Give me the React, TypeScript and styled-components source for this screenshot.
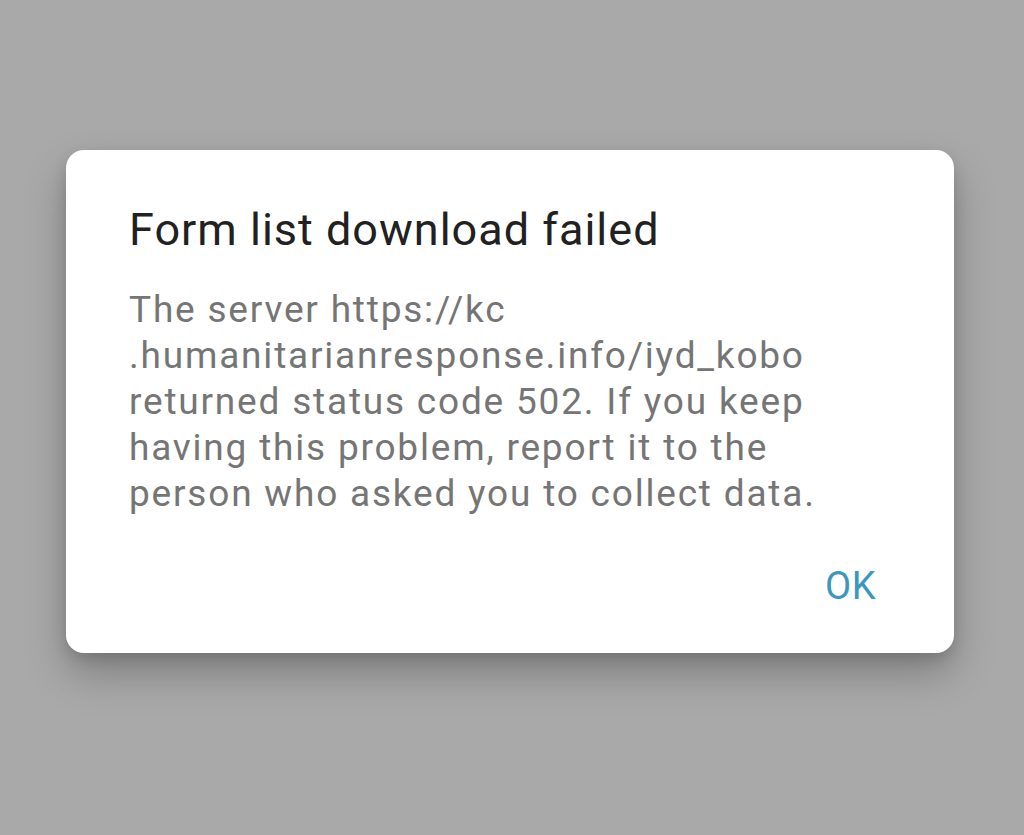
import React from "react";
import styled, { createGlobalStyle } from "styled-components";

const Global = createGlobalStyle`
  html, body { margin: 0; padding: 0; }
  body { background: #a9a9a9; font-family: Roboto, "Noto Sans", sans-serif; }
`;

const Screen = styled.div`
  width: 1024px;
  height: 835px;
  background: #a9a9a9;
  box-sizing: border-box;
  padding: 150px 70px 0 66px;
`;

const Dialog = styled.div`
  width: 888px;
  height: 503px;
  box-sizing: border-box;
  background: #ffffff;
  border-radius: 18px;
  box-shadow: 0 20px 40px rgba(0, 0, 0, 0.25), 0 6px 14px rgba(0, 0, 0, 0.12);
  padding: 52px 78px 0 63px;
  display: flex;
  flex-direction: column;
`;

const Title = styled.h1`
  margin: 0;
  font-family: Roboto, sans-serif;
  font-weight: 400;
  font-size: 45px;
  line-height: 56px;
  color: #212121;
  letter-spacing: 1px;
`;

const Message = styled.p`
  margin: 29px 0 0 0;
  font-family: Roboto, sans-serif;
  font-weight: 400;
  font-size: 37px;
  line-height: 46px;
  color: #757575;
  letter-spacing: 1.8px;
`;

const Actions = styled.div`
  display: flex;
  justify-content: flex-end;
  margin-top: 46px;
`;

const TextButton = styled.button`
  border: none;
  background: none;
  padding: 0;
  font-family: Roboto, sans-serif;
  font-weight: 400;
  font-size: 38px;
  line-height: 46px;
  color: #3b98bd;
  letter-spacing: 0.5px;
  cursor: pointer;
`;

export default function App() {
  return (
    <>
      <Global />
      <Screen>
        <Dialog>
          <Title>Form list download failed</Title>
          <Message>
            The server https://kc
            <br />
            .humanitarianresponse.info/iyd_kobo
            <br />
            returned status code 502. If you keep
            <br />
            having this problem, report it to the
            <br />
            person who asked you to collect data.
          </Message>
          <Actions>
            <TextButton>OK</TextButton>
          </Actions>
        </Dialog>
      </Screen>
    </>
  );
}
